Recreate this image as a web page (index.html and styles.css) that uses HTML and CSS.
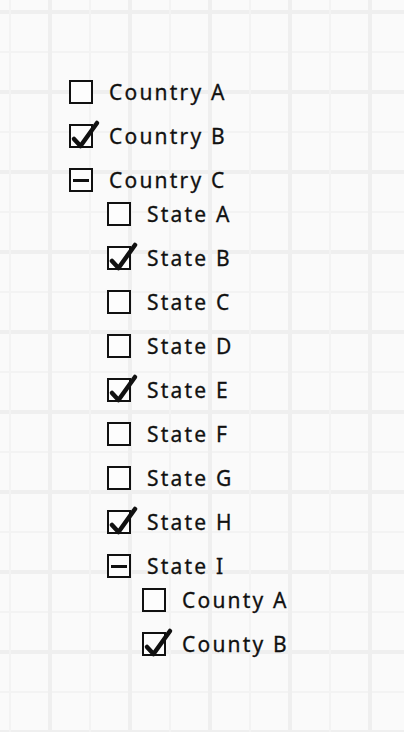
FILE: index.html
```html
<!DOCTYPE html>
<html lang="en">
<head>
    <meta charset="UTF-8">
    <meta name="viewport" content="width=device-width, initial-scale=1.0">
    <title>Region Tree</title>
    <link rel="stylesheet" href="styles.css">
</head>
<body>
    <ul class="tree">
        <li><div class="row"><span class="box"></span><span class="label">Country A</span></div></li>
        <li><div class="row"><span class="box checked"><svg class="tick" viewBox="0 0 24 24"><path d="M5 15 L11.5 22 L28 -1"/></svg></span><span class="label">Country B</span></div></li>
        <li>
            <div class="row"><span class="box partial"></span><span class="label">Country C</span></div>
            <ul class="tree nested">
                <li><div class="row"><span class="box"></span><span class="label">State A</span></div></li>
                <li><div class="row"><span class="box checked"><svg class="tick" viewBox="0 0 24 24"><path d="M5 15 L11.5 22 L28 -1"/></svg></span><span class="label">State B</span></div></li>
                <li><div class="row"><span class="box"></span><span class="label">State C</span></div></li>
                <li><div class="row"><span class="box"></span><span class="label">State D</span></div></li>
                <li><div class="row"><span class="box checked"><svg class="tick" viewBox="0 0 24 24"><path d="M5 15 L11.5 22 L28 -1"/></svg></span><span class="label">State E</span></div></li>
                <li><div class="row"><span class="box"></span><span class="label">State F</span></div></li>
                <li><div class="row"><span class="box"></span><span class="label">State G</span></div></li>
                <li><div class="row"><span class="box checked"><svg class="tick" viewBox="0 0 24 24"><path d="M5 15 L11.5 22 L28 -1"/></svg></span><span class="label">State H</span></div></li>
                <li>
                    <div class="row"><span class="box partial"></span><span class="label">State I</span></div>
                    <ul class="tree nested deep">
                        <li><div class="row"><span class="box"></span><span class="label">County A</span></div></li>
                        <li><div class="row"><span class="box checked"><svg class="tick" viewBox="0 0 24 24"><path d="M5 15 L11.5 22 L28 -1"/></svg></span><span class="label">County B</span></div></li>
                    </ul>
                </li>
            </ul>
        </li>
    </ul>
</body>
</html>
```
FILE: styles.css
```css
* {
    box-sizing: border-box;
    margin: 0;
    padding: 0;
}

body {
    min-height: 100vh;
    font-family: 'Noto Sans', sans-serif;
    color: #111;
    background-color: #fafafa;
    background-image:
        repeating-linear-gradient(90deg, transparent 0 9px, #f3f3f3 9px 11px, transparent 11px 48px, #efefef 48px 52px, transparent 52px 80px),
        repeating-linear-gradient(180deg, transparent 0 10px, #efefef 10px 14px, transparent 14px 51px, #f3f3f3 51px 53px, transparent 53px 80px);
    padding: 75px 0 0 69px;
}

.tree {
    list-style: none;
    display: flex;
    flex-direction: column;
    gap: 10px;
}

.nested {
    margin-left: 38px;
}

.nested.deep {
    margin-left: 35px;
}

.row {
    display: flex;
    align-items: center;
    gap: 16px;
    height: 34px;
}

.box {
    position: relative;
    flex: none;
    width: 24px;
    height: 24px;
    border: 2px solid #111;
    background: #fdfdfd;
}

/* indeterminate state: dash across the middle */
.box.partial::after {
    content: '';
    position: absolute;
    left: 2px;
    right: 2px;
    top: 8.5px;
    height: 3px;
    background: #111;
}

.tick {
    position: absolute;
    left: -2px;
    top: -2px;
    width: 24px;
    height: 24px;
    overflow: visible;
}

.tick path {
    fill: none;
    stroke: #111;
    stroke-width: 4.5;
    stroke-linecap: round;
    stroke-linejoin: round;
}

.label {
    font-size: 21px;
    line-height: 1;
    letter-spacing: 2.2px;
    -webkit-text-stroke: 0.3px #111;
}
```
